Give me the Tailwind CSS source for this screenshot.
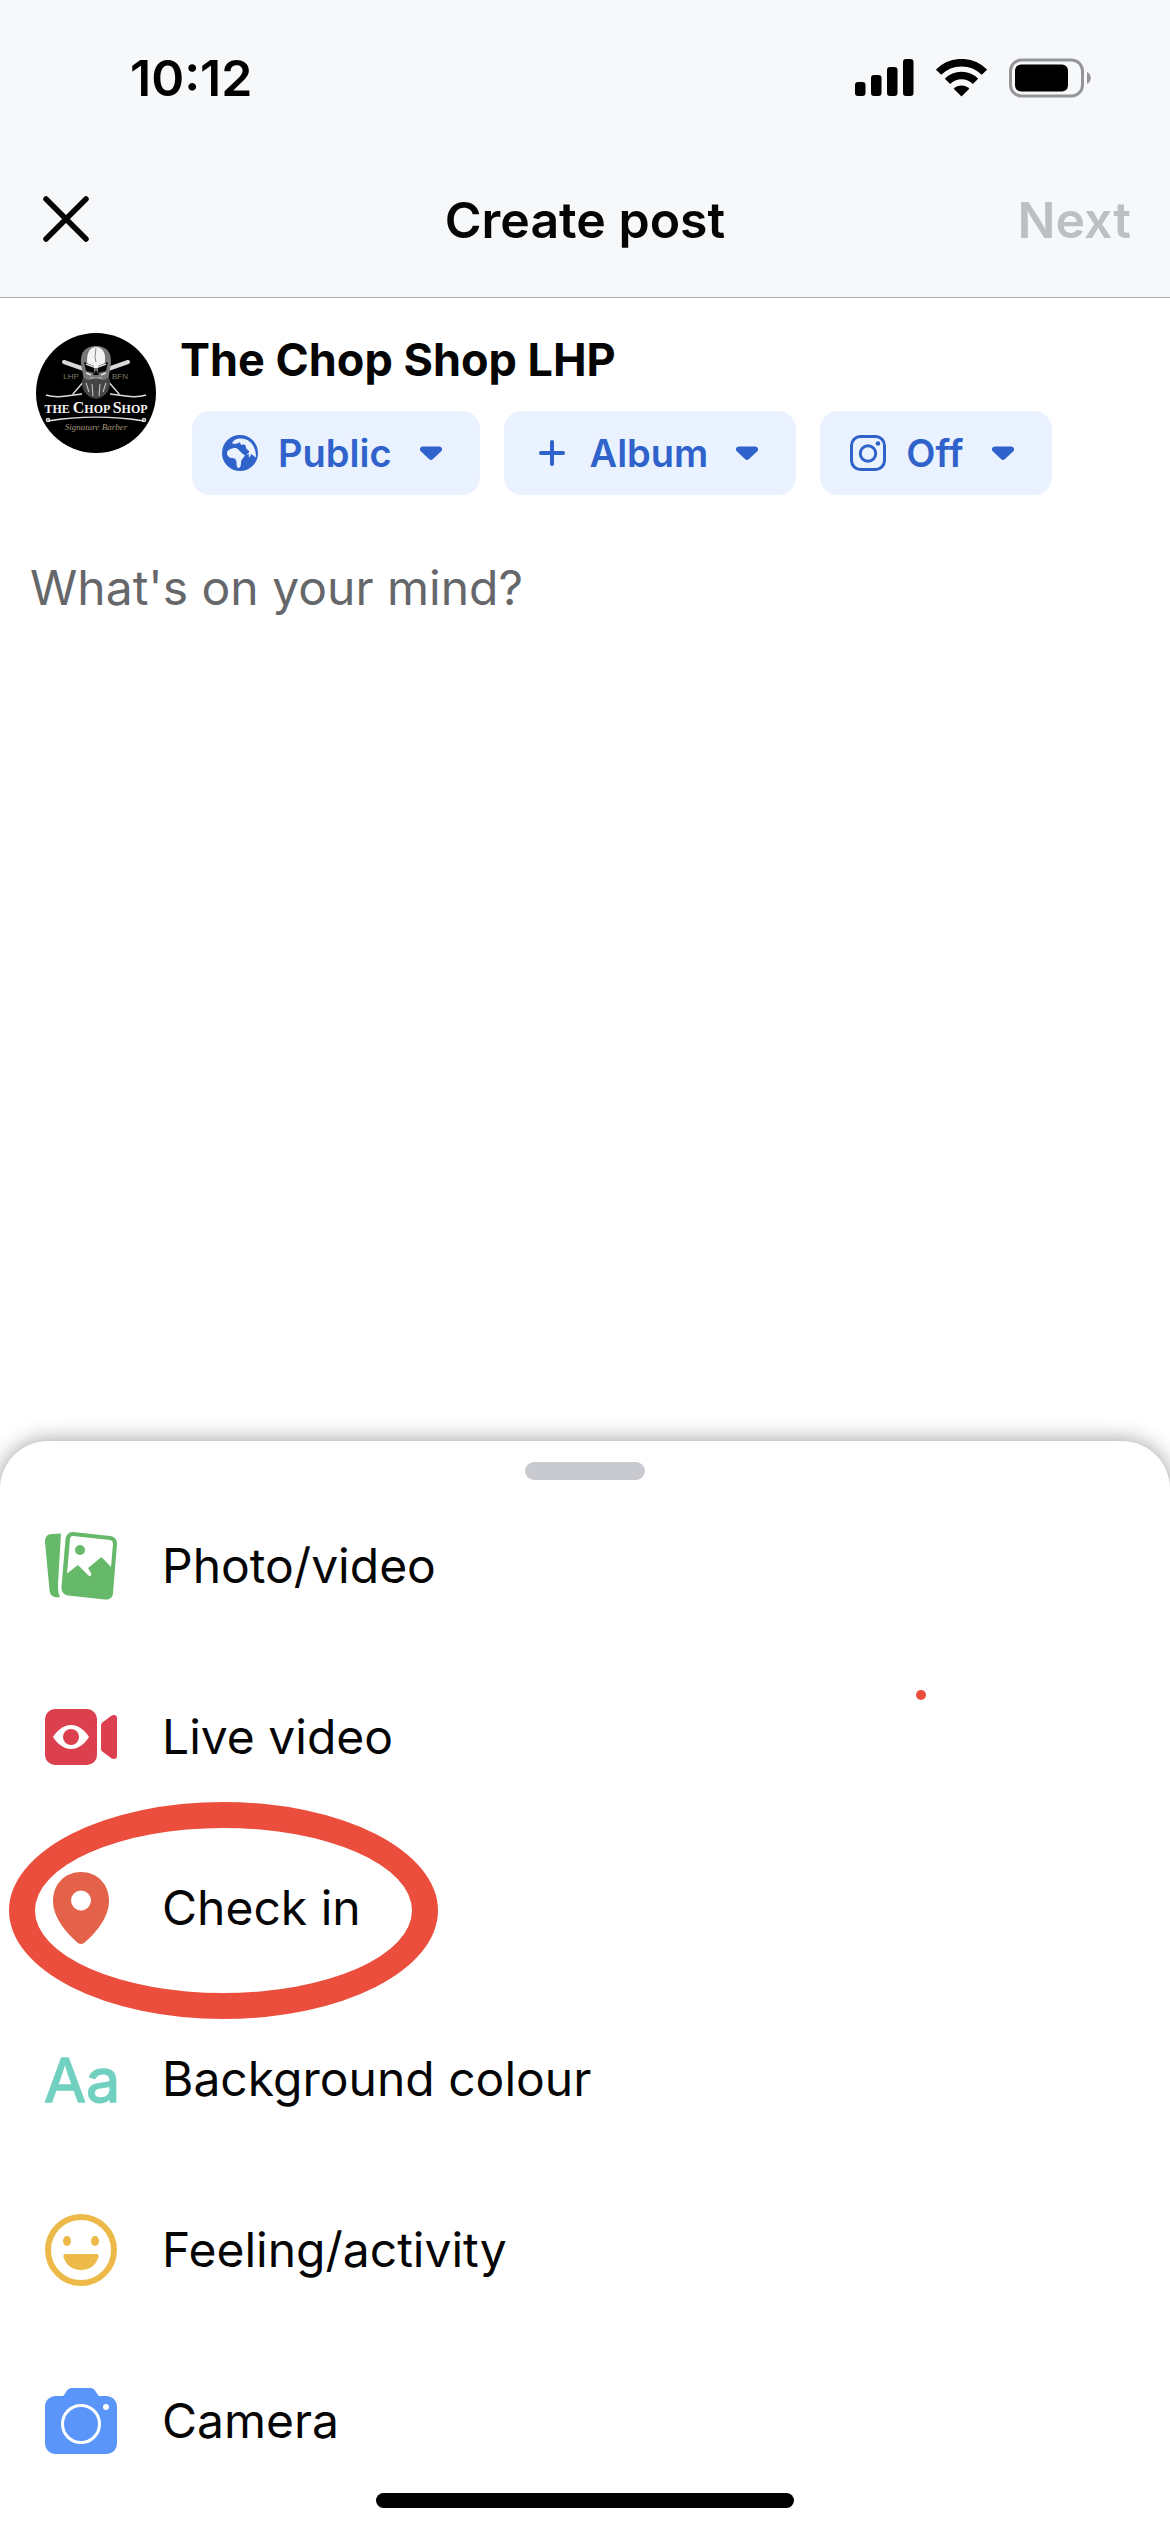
<!DOCTYPE html>
<html lang="en">
<head>
  <meta charset="UTF-8">
  <meta name="viewport" content="width=device-width, initial-scale=1.0">
  <title>Create post</title>
  <script src="https://cdn.jsdelivr.net/npm/@tailwindcss/browser@4"></script>
</head>
<body class="bg-white font-['Inter','Liberation_Sans',sans-serif] text-[#050505]">
  <div class="flex min-h-screen flex-col overflow-hidden">

    <header class="border-b border-[#adb0b4] bg-[#f7f8fa]">
      <!-- status bar -->
      <div class="flex h-[156px] items-center justify-between pl-[130px] pr-[78px] text-black">
        <span class="text-[50px] font-semibold">10:12</span>
        <div class="flex items-center gap-[22px]">
          <svg class="h-[38px] w-[59px]" viewBox="0 0 59 38" fill="currentColor" aria-label="Signal">
            <rect x="0" y="23" width="10.500" height="14" rx="3"/>
            <rect x="16" y="16" width="10.500" height="21" rx="3"/>
            <rect x="32" y="8" width="10.500" height="29" rx="3"/>
            <rect x="48" y="0" width="10.500" height="37" rx="3"/>
          </svg>
          <svg class="h-[38px] w-[51px]" viewBox="0 0 51 38" aria-label="Wi-Fi">
            <g fill="none" stroke="#000" stroke-width="7.500">
              <path d="M2.500 13.200a32.500 32.500 0 0 1 46 0"/>
              <path d="M11.500 22.400a19.800 19.800 0 0 1 28 0"/>
            </g>
            <path d="M25.500 37.500l-7.800-7.800c4.300-4.300 11.300-4.300 15.600 0z"/>
          </svg>
          <svg class="h-[40px] w-[83px]" viewBox="0 0 83 40" aria-label="Battery">
            <rect x="1.500" y="2" width="72" height="36" rx="11" fill="none" stroke="#949597" stroke-width="3"/>
            <rect x="6" y="6.500" width="53" height="27" rx="6"/>
            <path d="M78 14c5 2 5 10 0 12z" fill="#949597"/>
          </svg>
        </div>
      </div>
      <!-- title bar -->
      <div class="grid h-[141px] grid-cols-[1fr_auto_1fr] items-start px-[39px] pt-8">
        <button type="button" aria-label="Close" class="flex h-[62px] items-center justify-self-start">
          <svg class="size-[54px]" viewBox="0 0 54 54" fill="none" stroke="#050505" stroke-width="5.500" stroke-linecap="round">
            <path d="M7 7l40 40M47 7L7 47"/>
          </svg>
        </button>
        <h1 class="text-[50px] leading-[64px] font-semibold">Create post</h1>
        <button type="button" disabled class="justify-self-end text-[50px] leading-[64px] font-semibold text-[#bcc0c4]">Next</button>
      </div>
    </header>

    <main class="flex flex-1 flex-col">
      <section class="flex gap-6 pl-9 pt-[35px]">
        <svg class="size-[120px] shrink-0" viewBox="0 0 120 120" role="img" aria-label="The Chop Shop">
          <circle cx="60" cy="60" r="60"/>
          <!-- crossed razors -->
          <g stroke="#d8d8d8" stroke-linecap="round">
            <path d="M28 29l20 7M92 29l-20 7" stroke-width="4"/>
            <path d="M37 61l12-14M83 61L71 47" stroke-width="1.500"/>
          </g>
          <!-- skull and beard -->
          <path d="M46 36c-4-17 4-23 14-23s18 6 14 23l-2 12-6 6H54l-6-6z" fill="#777"/>
          <path d="M51 28c0-10 4-14 9-14s10 4 9 14l-1 7H52z" fill="#f4f4f4"/>
          <path d="M60 15l-1 9 1 5" fill="none" stroke="#888" stroke-width="1"/>
          <path d="M48 29l10 4v7l-8-2zM72 29l-10 4v7l8-2z" fill="#050505"/>
          <path d="M50 31l8 3M70 31l-8 3M50 40l5 2M70 40l-5 2" stroke="#ddd" stroke-width="1.500"/>
          <path d="M60 37l-3 5h6z" fill="#050505"/>
          <path d="M47 44c4 3 6 4 9 2l4-2 4 2c3 2 5 1 9-2 3 9-1 20-13 22-12-2-16-13-13-22z" fill="#444"/>
          <path d="M54 45h12M50 50l3 9M56 51l1 12M64 51l-1 12M70 50l-3 9" stroke="#bbb" stroke-width="1.200"/>
          <!-- banner -->
          <g fill="none" stroke="#ddd" stroke-width="1.500">
            <path d="M10 62c12 4 24 0 36-1M110 62c-12 4-24 0-36-1"/>
            <path d="M12 88c30-5 66-5 96 0"/>
            <circle cx="12" cy="87" r="1.500"/><circle cx="108" cy="87" r="1.500"/>
          </g>
          <g text-anchor="middle">
            <text x="60" y="80" font-family="'Liberation Serif',serif" font-weight="700" fill="#f2f2f2" stroke="#000" stroke-width="2" paint-order="stroke" font-size="12">T<tspan>HE </tspan><tspan font-size="16">C</tspan>HOP <tspan font-size="16">S</tspan>HOP</text>
            <text x="35" y="46" font-family="'Liberation Sans',sans-serif" font-size="8" fill="#80786a">LHP</text>
            <text x="84" y="46" font-family="'Liberation Sans',sans-serif" font-size="8" fill="#80786a">BFN</text>
            <text x="60" y="97" font-family="'Liberation Serif',serif" font-style="italic" font-size="9" fill="#a39478">Signature Barber</text>
          </g>
        </svg>
        <div>
          <h2 class="text-[45px] leading-[54px] font-bold">The Chop Shop LHP</h2>
          <div class="mt-6 ml-3 flex gap-6 text-[38px] font-semibold text-[#2f62ca]">
            <button type="button" class="flex h-[84px] items-center gap-5 rounded-[18px] bg-[#e9f2fe] pl-[30px] pr-[38px]">
              <svg class="size-9" viewBox="0 0 36 36">
                <circle cx="18" cy="18" r="18" fill="#2f62ca"/>
                <path d="M19 3.500c-3 0-5 .5-7 2l-2 2.500c2 1.500 5 1 7-.5 2 0 1 2 3 2.500 2-1 4 0 4 2.500s4 2.500 3 5l-3 2.500 3-1c-1 4 1 4.500 2 0l5 3.500c0-10-5-19-15-19zM6 15.500c3-2 6-3 9-2 3 2 5 6 8 6.500-1 3-4 4-4 8 0 3-1 5-3 5-2-2-1-5-2-8-1-2-4-2-5-2-4-1-5-5-3-7.500z" fill="#e9f2fe"/>
                <path d="M14 12c5-1 5 5 8 5" fill="none" stroke="#2f62ca" stroke-width="1.500"/>
              </svg>
              <span>Public</span>
              <svg class="ml-2 h-[15px] w-[22px]" viewBox="0 0 22 15" fill="currentColor"><path d="M3 .5h16c3 0 4 3 2 5l-8 7.500c-1.500 1.300-2.500 1.300-4 0L1 5.500C-1 3.500 0 .5 3 .5z"/></svg>
            </button>
            <button type="button" class="flex h-[84px] items-center gap-5 rounded-[18px] bg-[#e9f2fe] pl-[30px] pr-[38px]">
              <svg class="size-9" viewBox="0 0 36 36" fill="none" stroke="currentColor" stroke-width="4" stroke-linecap="round"><path d="M18 7v22M7 18h22"/></svg>
              <span>Album</span>
              <svg class="ml-2 h-[15px] w-[22px]" viewBox="0 0 22 15" fill="currentColor"><path d="M3 .5h16c3 0 4 3 2 5l-8 7.500c-1.500 1.300-2.500 1.300-4 0L1 5.500C-1 3.500 0 .5 3 .5z"/></svg>
            </button>
            <button type="button" class="flex h-[84px] items-center gap-5 rounded-[18px] bg-[#e9f2fe] pl-[30px] pr-[38px]">
              <svg class="size-9" viewBox="0 0 36 36" fill="none" stroke="currentColor" stroke-width="3">
                <rect x="1.500" y="1.500" width="33" height="33" rx="9"/>
                <circle cx="18" cy="18.500" r="7.700"/>
                <circle cx="28" cy="8.500" r="2.300" fill="currentColor" stroke="none"/>
              </svg>
              <span>Off</span>
              <svg class="ml-2 h-[15px] w-[22px]" viewBox="0 0 22 15" fill="currentColor"><path d="M3 .5h16c3 0 4 3 2 5l-8 7.500c-1.500 1.300-2.500 1.300-4 0L1 5.500C-1 3.500 0 .5 3 .5z"/></svg>
            </button>
          </div>
        </div>
      </section>
      <textarea aria-label="Post text" placeholder="What's on your mind?" class="mt-[61px] w-full flex-1 resize-none px-[30px] text-[48px] leading-[64px] outline-none placeholder:text-[#65676b]"></textarea>
    </main>

    <!-- bottom sheet -->
    <section class="relative rounded-t-[48px] bg-white pt-[21px] pb-[26px] shadow-[0_0_22px_rgba(0,0,0,0.4)]">
      <div class="mx-auto h-[18px] w-[120px] rounded-full bg-[#c9cad0]"></div>
      <ul class="text-[48px]">
        <li>
          <button type="button" class="flex h-[171px] w-full items-center gap-[45px] pl-[45px]">
            <svg class="size-[72px]" viewBox="0 0 72 72" fill="#67b96a">
              <path d="M7 4l9-.5L13 54c0 5 0 9 2 13-6 1-10-1-10.500-7L0 12c0-5 2-8 7-8z"/>
              <path d="M28 2l37 4c5 .5 7 4 7 8l-4 49c0 4-3 7-8 6.500l-37-4c-4-.5-7-4-6.500-9l4-47C21 5 24 1.600 28 2z"/>
              <path d="M28 6l37 4c2 .3 3 2 3 4l-2 23-9.500-10L43 38l3 5c1 2-1 4-2 3l-11-11-11 8.500 3-34c.2-2.500 1-3.700 3-3.500z" fill="#fff"/>
              <circle cx="35" cy="20" r="5"/>
            </svg>
            <span>Photo/video</span>
          </button>
        </li>
        <li>
          <button type="button" class="flex h-[171px] w-full items-center gap-[45px] pl-[45px]">
            <svg class="size-[72px]" viewBox="0 0 72 72" fill="#dc3f4e">
              <rect x="0" y="8" width="52" height="56" rx="10"/>
              <path d="M56 25c0-2 .5-3 2-4l8-6c3-2 6-1 6 2v38c0 3-3 4-6 2l-8-6c-1.500-1-2-2-2-4z"/>
              <path d="M8 36c4-6 10-12 18-12s14 6 18 12c-4 6-10 12-18 12S12 42 8 36z" fill="#fff"/>
              <circle cx="26" cy="36" r="8"/>
            </svg>
            <span>Live video</span>
          </button>
        </li>
        <li class="relative">
          <button type="button" class="flex h-[171px] w-full items-center gap-[45px] pl-[45px]">
            <svg class="size-[72px]" viewBox="0 0 72 72">
              <path d="M36 0c16 0 28 12 28 29 0 16-13 32-25 42-2 1.300-4 1.300-6 0C21 61 8 45 8 29 8 12 20 0 36 0z" fill="#e36249"/>
              <circle cx="36" cy="28.500" r="10" fill="#fff"/>
            </svg>
            <span>Check in</span>
          </button>
          <!-- marker ring and stray dot -->
          <span class="pointer-events-none absolute top-[-20px] left-[9px] h-[217px] w-[429px] rounded-[50%] border-[26px] border-[#eb4e3d]"></span>
          <span class="pointer-events-none absolute top-[-132px] left-[916px] size-[10px] rounded-full bg-[#eb4e3d]"></span>
        </li>
        <li>
          <button type="button" class="flex h-[171px] w-full items-center gap-[45px] pl-[45px]">
            <svg class="size-[72px] overflow-visible" viewBox="0 0 72 72">
              <text x="-1" y="59" font-family="Inter,'Liberation Sans',sans-serif" font-size="61" font-weight="400" fill="#72d0c0" stroke="#72d0c0" stroke-width="1.500" stroke-linejoin="round">Aa</text>
            </svg>
            <span>Background colour</span>
          </button>
        </li>
        <li>
          <button type="button" class="flex h-[171px] w-full items-center gap-[45px] pl-[45px]">
            <svg class="size-[72px]" viewBox="0 0 72 72" fill="#edba4a">
              <circle cx="36" cy="36" r="33" fill="none" stroke="#edba4a" stroke-width="6"/>
              <ellipse cx="22" cy="27" rx="4" ry="5"/>
              <ellipse cx="50" cy="27" rx="4" ry="5"/>
              <path d="M21 40h30c2 0 3 1 2.500 3C51 51 45 56 36 56s-15-5-17.500-13c-.5-2 .5-3 2.500-3z"/>
            </svg>
            <span>Feeling/activity</span>
          </button>
        </li>
        <li>
          <button type="button" class="flex h-[171px] w-full items-center gap-[45px] pl-[45px]">
            <svg class="size-[72px]" viewBox="0 0 72 72">
              <path d="M27 3h18c3 0 5 2 6 4l2 3c.5 1 1.500 1 2.500 1H61c7 0 11 5 11 11v36c0 7-5 11-11 11H11C4 69 0 64 0 58V22c0-6 4-11 11-11h5.500c1 0 2 0 2.500-1l2-3c1-2 3-4 6-4z" fill="#5a96fa"/>
              <circle cx="36" cy="39" r="18.500" fill="none" stroke="#fff" stroke-width="3"/>
              <circle cx="61" cy="22" r="3" fill="#fff"/>
            </svg>
            <span>Camera</span>
          </button>
        </li>
      </ul>
      <div class="absolute bottom-6 left-1/2 h-[15px] w-[418px] -translate-x-1/2 rounded-full bg-black"></div>
    </section>
  </div>
</body>
</html>
